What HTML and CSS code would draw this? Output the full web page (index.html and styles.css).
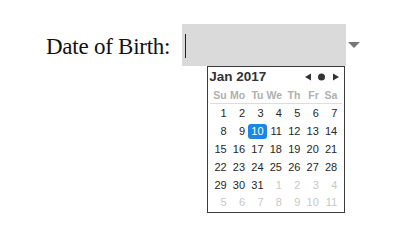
FILE: index.html
```html
<!DOCTYPE html>
<html lang="en">
<head>
  <meta charset="UTF-8">
  <meta name="viewport" content="width=device-width, initial-scale=1.0">
  <title>Date of Birth</title>
  <link rel="stylesheet" href="styles.css">
</head>
<body>
  <div class="field">
    <label class="field-label" for="dob">Date of Birth:</label>
    <div class="picker">
      <div class="picker-row">
        <div class="picker-input" id="dob"><span class="caret"></span></div>
        <svg class="picker-arrow" width="12" height="6" viewBox="0 0 12 6"><polygon points="0,0 12,0 6,6" fill="#777"/></svg>
      </div>

      <div class="calendar">
        <div class="cal-head">
          <span class="cal-title">Jan 2017</span>
          <svg class="cal-nav" width="34" height="8" viewBox="0 0 34 8">
            <polygon points="0,4 6,0.5 6,7.5" fill="#333"/>
            <circle cx="16.5" cy="4" r="3.5" fill="#333"/>
            <polygon points="34,4 28,0.5 28,7.5" fill="#333"/>
          </svg>
        </div>
        <div class="cal-days">
          <span>Su</span><span>Mo</span><span>Tu</span><span>We</span><span>Th</span><span>Fr</span><span>Sa</span>
        </div>
        <div class="cal-grid">
          <span>1</span><span>2</span><span>3</span><span>4</span><span>5</span><span>6</span><span>7</span>
          <span>8</span><span>9</span><span class="selected">10</span><span>11</span><span>12</span><span>13</span><span>14</span>
          <span>15</span><span>16</span><span>17</span><span>18</span><span>19</span><span>20</span><span>21</span>
          <span>22</span><span>23</span><span>24</span><span>25</span><span>26</span><span>27</span><span>28</span>
          <span>29</span><span>30</span><span>31</span><span class="other">1</span><span class="other">2</span><span class="other">3</span><span class="other">4</span>
          <span class="other">5</span><span class="other">6</span><span class="other">7</span><span class="other">8</span><span class="other">9</span><span class="other">10</span><span class="other">11</span>
        </div>
      </div>
    </div>
  </div>
</body>
</html>
```

FILE: styles.css
```css
body {
  margin: 0;
  background: #fff;
  font-family: "Liberation Sans", Arial, sans-serif;
}

.field {
  display: flex;
  align-items: flex-start;
  padding: 24px 0 0 46px;
}

.field-label {
  font-family: "Liberation Serif", "Times New Roman", serif;
  font-size: 23px;
  letter-spacing: -0.25px;
  line-height: 42px;
  padding-top: 2px;
  color: #111;
}

.picker {
  display: flex;
  flex-direction: column;
  align-items: flex-start;
  margin-left: 12px;
}

.picker-row {
  display: flex;
  align-items: center;
}

.picker-input {
  width: 164px;
  height: 42px;
  background: #dadada;
  box-sizing: border-box;
  padding: 10px 0 0 3px;
}

.caret {
  display: block;
  width: 1px;
  height: 24px;
  background: #222;
}

.picker-arrow {
  margin-left: 2px;
  margin-top: -1px;
}

/* dropdown calendar */
.calendar {
  margin-left: 25px;
  width: 138px;
  height: 147px;
  box-sizing: border-box;
  border: 1px solid #3a3a3a;
  background: #fff;
  padding: 1px 4px 1px 3px;
}

.cal-head {
  display: flex;
  align-items: center;
  justify-content: space-between;
  height: 17px;
  margin-left: -2px;
  padding-right: 1px;
}

.cal-title {
  font-size: 13.5px;
  font-weight: bold;
  line-height: 17px;
  color: #333;
}

.cal-nav {
  margin-top: 1px;
}

.cal-days {
  display: grid;
  grid-template-columns: repeat(7, 1fr);
  margin: 3px -2px 0 -1px;
  padding: 0 2px 1px 1px;
  border-bottom: 1px solid #ddd;
}

.cal-days span {
  font-size: 10.5px;
  font-weight: bold;
  line-height: 14px;
  color: #b0b0b0;
  text-align: right;
  padding-right: 3px;
}

.cal-grid {
  display: grid;
  grid-template-columns: repeat(7, 1fr);
  grid-auto-rows: 15px;
  row-gap: 2.9px;
  margin-top: 2px;
}

.cal-grid span {
  font-size: 11px;
  line-height: 15px;
  color: #262626;
  text-align: right;
  padding-right: 3px;
}

.cal-grid .other {
  color: #c8c8c8;
}

.cal-grid .selected {
  background: #1b86e6;
  color: #fff;
  border-radius: 3px;
}
```
